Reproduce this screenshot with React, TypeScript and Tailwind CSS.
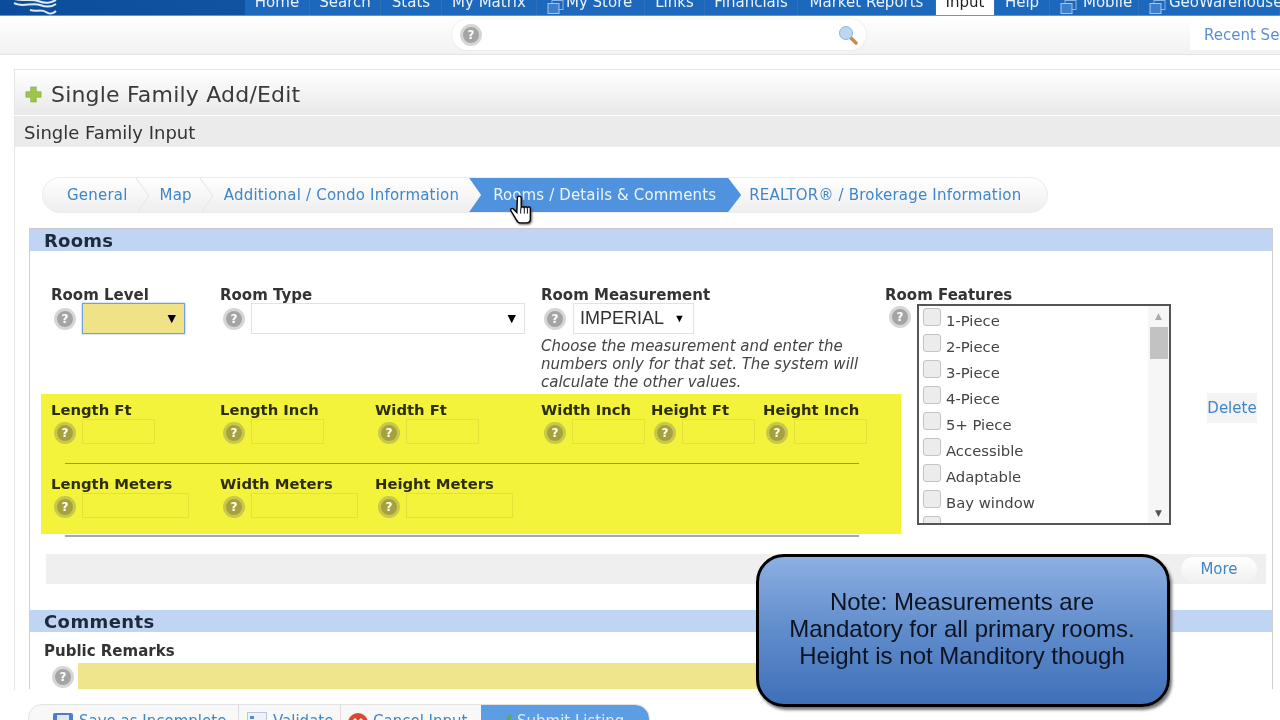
const navItems = [
  { label: 'Home', width: 'w-[65px]' },
  { label: 'Search', width: 'w-[71px]' },
  { label: 'Stats', width: 'w-[61px]' },
  { label: 'My Matrix', width: 'w-[95px]' },
  { label: 'My Store', width: 'w-[108px]', gap: 'mr-[2px]' },
  { label: 'Links', width: 'w-[60px]' },
  { label: 'Financials', width: 'w-[93px]' },
  { label: 'Market Reports', width: 'w-[138px]' },
  { label: 'Input', width: 'w-[59px]', active: true },
  { label: 'Help', width: 'w-[55px]' },
  { label: 'Mobile', width: 'w-[89px]', gap: 'mr-[6px]' },
  { label: 'GeoWarehouse', width: 'w-[141px]', gap: 'mr-[3px]' },
]

const crumbs = ['General', 'Map', 'Additional / Condo Information', 'Rooms / Details & Comments', 'REALTOR® / Brokerage Information']

const features = ['1-Piece', '2-Piece', '3-Piece', '4-Piece', '5+ Piece', 'Accessible', 'Adaptable', 'Bay window', 'Built-in Grill']

function WindowIcon({ gap }: { gap: string }) {
  return (
    <svg width="17" height="14" viewBox="0 0 16 14" className={`shrink-0 ${gap}`}>
      <rect x="4.5" y="0.5" width="11" height="9" fill="none" stroke="#8fb4de" />
      <rect x="0.5" y="3.5" width="11" height="10" fill="#3d7fca" stroke="#a9c6e6" />
    </svg>
  )
}

function Help({ onYellow = false }: { onYellow?: boolean }) {
  return (
    <span
      className={`flex h-[22px] w-[22px] shrink-0 items-center justify-center rounded-full border-[3px] text-[12px] leading-none font-bold text-white ${
        onYellow ? 'border-[#c9c74d] bg-[#a5a23b]' : 'border-[#d6d6d6] bg-[#a4a4a4]'
      }`}
    >
      ?
    </span>
  )
}

function Arrow() {
  return <span className="ml-auto text-[11px] leading-none text-black">▼</span>
}

function Field({ label, width }: { label: string; width: string }) {
  return (
    <div>
      <div className="h-[17px] text-[14.8px] leading-[15px] font-bold whitespace-nowrap text-[#2d2d10]">{label}</div>
      <div className="flex items-start gap-[6px] pl-[3px]">
        <div className="pt-[3px]">
          <Help onYellow />
        </div>
        <div className={`h-[25px] border border-[#e4e138] ${width}`} />
      </div>
    </div>
  )
}

function Logo() {
  return (
    <svg width="50" height="16" viewBox="0 0 50 16" className="ml-[8px]">
      <path d="M2 -3 C10 3 22 -2 30 1 S42 3 48 0" fill="none" stroke="#dfeaf7" strokeWidth="2" />
      <path d="M6 3 C14 8 24 2 32 5 S44 7 48 4" fill="none" stroke="#dfeaf7" strokeWidth="2" />
      <path d="M22 10 C28 12 34 9 38 12 S46 13 48 11" fill="none" stroke="#dfeaf7" strokeWidth="2" />
    </svg>
  )
}

export default function App() {
  return (
    <div className="relative h-[720px] w-[1280px] overflow-hidden bg-white font-['DejaVu_Sans',sans-serif] blur-[0.4px]">
      {/* top nav, cut off by the top of the video frame */}
      <div className="flex h-[16px] overflow-hidden border-b border-[#5f96d2] bg-gradient-to-r from-[#0b4d9b] via-[#1b5dab] to-[#1a66b8]">
        <div className="w-[245px] shrink-0">
          <Logo />
        </div>
        {navItems.map((item) => (
          <div
            key={item.label}
            className={`flex h-[15px] shrink-0 items-start border-r border-[#2f70b8] text-[15px] leading-[14px] whitespace-nowrap ${item.width} ${
              item.gap ? 'pl-[10px]' : 'justify-center'
            } ${item.active ? 'bg-white text-[#222]' : 'bg-[#1c68bd] text-[#eaf2fa]'}`}
          >
            {item.gap && <WindowIcon gap={item.gap} />}
            <span className="-mt-[5px]">{item.label}</span>
          </div>
        ))}
      </div>

      {/* search row */}
      <div className="flex h-[39px] border-b border-[#e4e4e4] bg-gradient-to-b from-white to-[#f2f2f2] pt-[3px]">
        <div className="ml-[452px] flex h-[31px] w-[414px] items-center rounded-full bg-white pr-[8px] pl-[8px] shadow-[0_0_2px_#ddd]">
          <Help />
          <svg width="20" height="20" viewBox="0 0 20 20" className="ml-auto">
            <path d="M12 12 L18 18" stroke="#c98a4c" strokeWidth="3.5" strokeLinecap="round" />
            <circle cx="8" cy="8" r="6.5" fill="#bcd8f1" stroke="#8db6db" />
          </svg>
        </div>
        <div className="ml-[324px] flex h-[31px] flex-1 items-center overflow-hidden bg-white pt-[1px] pl-[14px] text-[15px] whitespace-nowrap text-[#5c8fd0]">
          Recent Searches
        </div>
      </div>

      {/* page title */}
      <div className="mt-[14px] ml-[14px] flex h-[46px] items-center border-t border-l border-[#e6e6e6] bg-gradient-to-b from-white to-[#e9e9e9] pt-[3px] pl-[9px]">
        <svg width="19" height="19" viewBox="0 0 20 20">
          <path d="M7 2h6v5h5v6h-5v5H7v-5H2V7h5z" fill="#9cc64a" stroke="#6f9f35" strokeWidth="0.5" />
        </svg>
        <span className="ml-[8px] text-[22px] tracking-[0.2px] text-[#3a3a3a]">Single Family Add/Edit</span>
      </div>

      <div className="ml-[14px] h-[574px] border-l border-[#e6e6e6]">
        <div className="mt-px flex h-[31px] items-center bg-[#ebebeb] pt-[1px] pl-[9px] text-[18px] text-[#333]">Single Family Input</div>

        {/* wizard steps */}
        <div className="mt-[30px] ml-[27px] flex h-[36px] w-[1006px] items-center overflow-hidden rounded-full border border-[#ececec] bg-gradient-to-b from-white to-[#eeeeee] pl-[8px] text-[15px] tracking-[0.2px] whitespace-nowrap text-[#3f86c8]">
          {crumbs.map((crumb, i) =>
            i === 3 ? (
              <div
                key={crumb}
                className="z-10 -mr-[8px] -ml-[6px] flex h-full items-center bg-[#4f93de] pt-[1px] pr-[25px] pl-[24px] tracking-[0.13px] text-[#eef5fc] [clip-path:polygon(0_0,calc(100%-13px)_0,100%_50%,calc(100%-13px)_100%,0_100%,12px_50%)]"
              >
                {crumb}
              </div>
            ) : (
              <div key={crumb} className="relative flex h-full items-center px-[16px] pt-[1px]">
                {crumb}
                {i < 2 && (
                  <svg width="16" height="36" viewBox="0 0 16 36" className="absolute top-0 -right-[7px]">
                    <path d="M1 0 L14 18 L1 36" fill="none" stroke="#e4e4e4" />
                  </svg>
                )}
              </div>
            ),
          )}
        </div>

        {/* form */}
        <div className="mt-[15px] ml-[14px] h-[461px] w-[1244px] overflow-hidden border-x border-[#cfcfcf]">
          <div className="flex h-[23px] items-center border-t border-[#c9c9c9] bg-[#c0d4f4] pl-[14px] text-[18px] font-bold tracking-[0.2px] text-[#1d2a3a]">
            Rooms
          </div>

          <div className="flex pt-[35px] pl-[11px]">
            <div className="w-[844px] shrink-0">
              <div className="grid h-[108px] grid-cols-[169px_321px_auto] pl-[10px] text-[#333]">
                <div>
                  <div className="h-[17px] text-[15px] leading-[18px] font-bold whitespace-nowrap">Room Level</div>
                  <div className="flex items-center gap-[6px] pl-[3px]">
                    <Help />
                    <div className="flex h-[31px] w-[103px] items-center border border-[#6f9fe0] bg-[#f0e286] pr-[8px] shadow-[0_0_2px_#8fb8ec]">
                      <Arrow />
                    </div>
                  </div>
                </div>
                <div>
                  <div className="h-[17px] text-[15px] leading-[18px] font-bold whitespace-nowrap">Room Type</div>
                  <div className="flex items-center gap-[6px] pl-[3px]">
                    <Help />
                    <div className="flex h-[31px] w-[274px] items-center border border-[#e2e2e2] pr-[8px]">
                      <Arrow />
                    </div>
                  </div>
                </div>
                <div>
                  <div className="h-[17px] text-[15px] leading-[18px] font-bold whitespace-nowrap">Room Measurement</div>
                  <div className="flex items-center gap-[7px] pl-[3px]">
                    <Help />
                    <div className="flex h-[31px] w-[121px] items-center border border-[#e2e2e2] pr-[8px] pl-[6px] font-['Liberation_Sans',sans-serif] text-[18px] text-[#333]">
                      IMPERIAL
                      <Arrow />
                    </div>
                  </div>
                  <p className="mt-[3px] w-[330px] text-[15px] leading-[18px] text-[#444] italic">
                    Choose the measurement and enter the numbers only for that set. The system will calculate the other values.
                  </p>
                </div>
              </div>

              <div className="w-[860px] bg-[#f4f33c] pt-[8px] pl-[10px]">
                <div className="grid h-[52px] grid-cols-[169px_155px_166px_110px_112px_auto]">
                  <Field label="Length Ft" width="w-[73px]" />
                  <Field label="Length Inch" width="w-[73px]" />
                  <Field label="Width Ft" width="w-[73px]" />
                  <Field label="Width Inch" width="w-[73px]" />
                  <Field label="Height Ft" width="w-[73px]" />
                  <Field label="Height Inch" width="w-[73px]" />
                </div>
                <div className="mt-[9px] ml-[14px] w-[794px] border-t border-[#a09a30]" />
                <div className="mt-[12px] grid h-[58px] grid-cols-[169px_155px_auto]">
                  <Field label="Length Meters" width="w-[107px]" />
                  <Field label="Width Meters" width="w-[107px]" />
                  <Field label="Height Meters" width="w-[107px]" />
                </div>
              </div>
              <div className="mt-px ml-[24px] w-[794px] border-t-2 border-[#a8a8a8]" />
            </div>

            <div>
              <div className="h-[18px] text-[15px] leading-[18px] font-bold whitespace-nowrap text-[#333]">Room Features</div>
              <div className="flex">
                <div className="mt-[2px] pl-[4px]">
                  <Help />
                </div>
                <div className="ml-[6px] flex h-[221px] w-[254px] overflow-hidden border-2 border-[#555]">
                  <div className="flex-1 pt-[2px] pl-[4px]">
                    {features.map((f) => (
                      <div key={f} className="flex h-[26px] text-[14.8px] text-[#444]">
                        <span className="h-[18px] w-[18px] shrink-0 rounded-[3px] border border-[#c4c4c4] bg-[#ececec]" />
                        <span className="mt-[3px] ml-[5px] leading-[20px]">{f}</span>
                      </div>
                    ))}
                  </div>
                  <div className="flex w-[21px] flex-col items-center bg-[#f6f6f6] text-[9px] text-[#555]">
                    <span className="h-[21px] pt-[6px] leading-none text-[#aaa]">▲</span>
                    <span className="h-[32px] w-[18px] bg-[#c2c2c2]" />
                    <span className="mt-auto pb-[5px] leading-none">▼</span>
                  </div>
                </div>
                <div className="mt-[89px] ml-[36px] flex h-[30px] w-[50px] items-center justify-center bg-[#f3f3f3] text-[15px] text-[#3f86c8]">
                  Delete
                </div>
              </div>
            </div>
          </div>

          <div className="mt-[17px] ml-[16px] flex h-[30px] w-[1220px] items-center justify-end bg-[#efefef] pr-[9px]">
            <span className="flex h-[25px] w-[76px] items-center justify-center rounded-full bg-gradient-to-b from-white to-[#f1f1f1] text-[15px] text-[#3f86c8]">
              More
            </span>
          </div>

          <div className="mt-[26px] flex h-[22px] items-center bg-[#c0d4f4] pl-[14px] text-[18px] font-bold tracking-[0.4px] text-[#1d2a3a]">
            Comments
          </div>
          <div className="mt-[11px] ml-[14px] text-[15px] leading-[16px] font-bold text-[#333]">Public Remarks</div>
          <div className="mt-[4px] ml-[22px] flex items-end gap-[4px]">
            <div className="mb-[1px]">
              <Help />
            </div>
            <div className="h-[26px] w-[1060px] bg-[#efe58c]" />
          </div>
        </div>
      </div>

      {/* action tabs */}
      <div className="mt-[14px] ml-[28px] flex h-[30px] w-[622px] overflow-hidden rounded-t-[14px] border border-[#e3e3e3] bg-[#f8f8f8] text-[15px] whitespace-nowrap text-[#3f86c8]">
        <div className="flex h-full w-[210px] border-r border-[#ddd] pt-[5px] pl-[23px]">
          <svg width="22" height="22" viewBox="0 0 22 22" className="mt-[2px] mr-[5px] shrink-0">
            <rect x="1" y="1" width="20" height="20" rx="2" fill="#4d7fc2" />
            <rect x="5" y="3" width="12" height="6" fill="#dfe9f6" />
          </svg>
          Save as Incomplete
        </div>
        <div className="flex h-full w-[102px] border-r border-[#ddd] pt-[5px] pl-[8px]">
          <svg width="20" height="18" viewBox="0 0 20 18" className="mt-[2px] mr-[6px] shrink-0">
            <rect x="0.5" y="0.5" width="19" height="17" fill="#eef3fa" stroke="#b9c7da" />
            <rect x="3" y="4" width="4" height="3" fill="#5a8ccb" />
            <rect x="3" y="10" width="4" height="3" fill="#5a8ccb" />
          </svg>
          Validate
        </div>
        <div className="flex h-full w-[140px] pt-[5px] pl-[6px]">
          <svg width="22" height="22" viewBox="0 0 22 22" className="mt-[2px] mr-[4px] shrink-0">
            <circle cx="11" cy="11" r="10" fill="#d9482c" />
            <path d="M7 7 L15 15 M15 7 L7 15" stroke="#fff" strokeWidth="3" />
          </svg>
          Cancel Input
        </div>
        <div className="flex h-full flex-1 rounded-tr-[14px] bg-[#5d9de4] pt-[5px] pl-[16px] text-[#dcebfa]">
          <svg width="16" height="18" viewBox="0 0 16 18" className="mt-[2px] mr-[4px] shrink-0">
            <path d="M2 10 L6 15 L14 3" fill="none" stroke="#5fae3a" strokeWidth="3" />
          </svg>
          Submit Listing
        </div>
      </div>

      {/* mouse pointer from the recording */}
      <svg width="22" height="30" viewBox="0 0 21 29" className="absolute top-[195px] left-[510px] z-20 drop-shadow-[1px_1px_1px_#555]">
        <path
          d="M6.5 17 L3 13.5 c-1.5-1.5-3.2 .3-2 2 L6 24 c1 2 2 3 4 3 h6 c2.5 0 3.5-2 3.5-4 V13 c0-2-2.5-2-2.8 0 c0-2.2-3-2.2-3 0 c0-2.2-3-2.2-3 0 V3 c0-2.5-3.7-2.5-3.7 0 z"
          fill="#fff"
          stroke="#000"
          strokeWidth="1.3"
        />
        <path d="M10.2 13 V18 M13.7 13 V18 M16.7 13 V18" stroke="#000" strokeWidth="0.9" />
      </svg>

      {/* video annotation callout */}
      <div className="absolute top-[554px] left-[756px] z-20 flex h-[153px] w-[414px] items-center justify-center rounded-[28px] border-[3px] border-black bg-gradient-to-b from-[#8db0e2] via-[#5f8ccb] to-[#3f70b8] pr-[2px] pb-[4px] text-center font-['Liberation_Sans',sans-serif] text-[24px] leading-[27px] text-[#0c1220] shadow-[2px_3px_3px_#777]">
        <div>
          Note: Measurements are
          <br />
          Mandatory for all primary rooms.
          <br />
          Height is not Manditory though
        </div>
      </div>
    </div>
  )
}
